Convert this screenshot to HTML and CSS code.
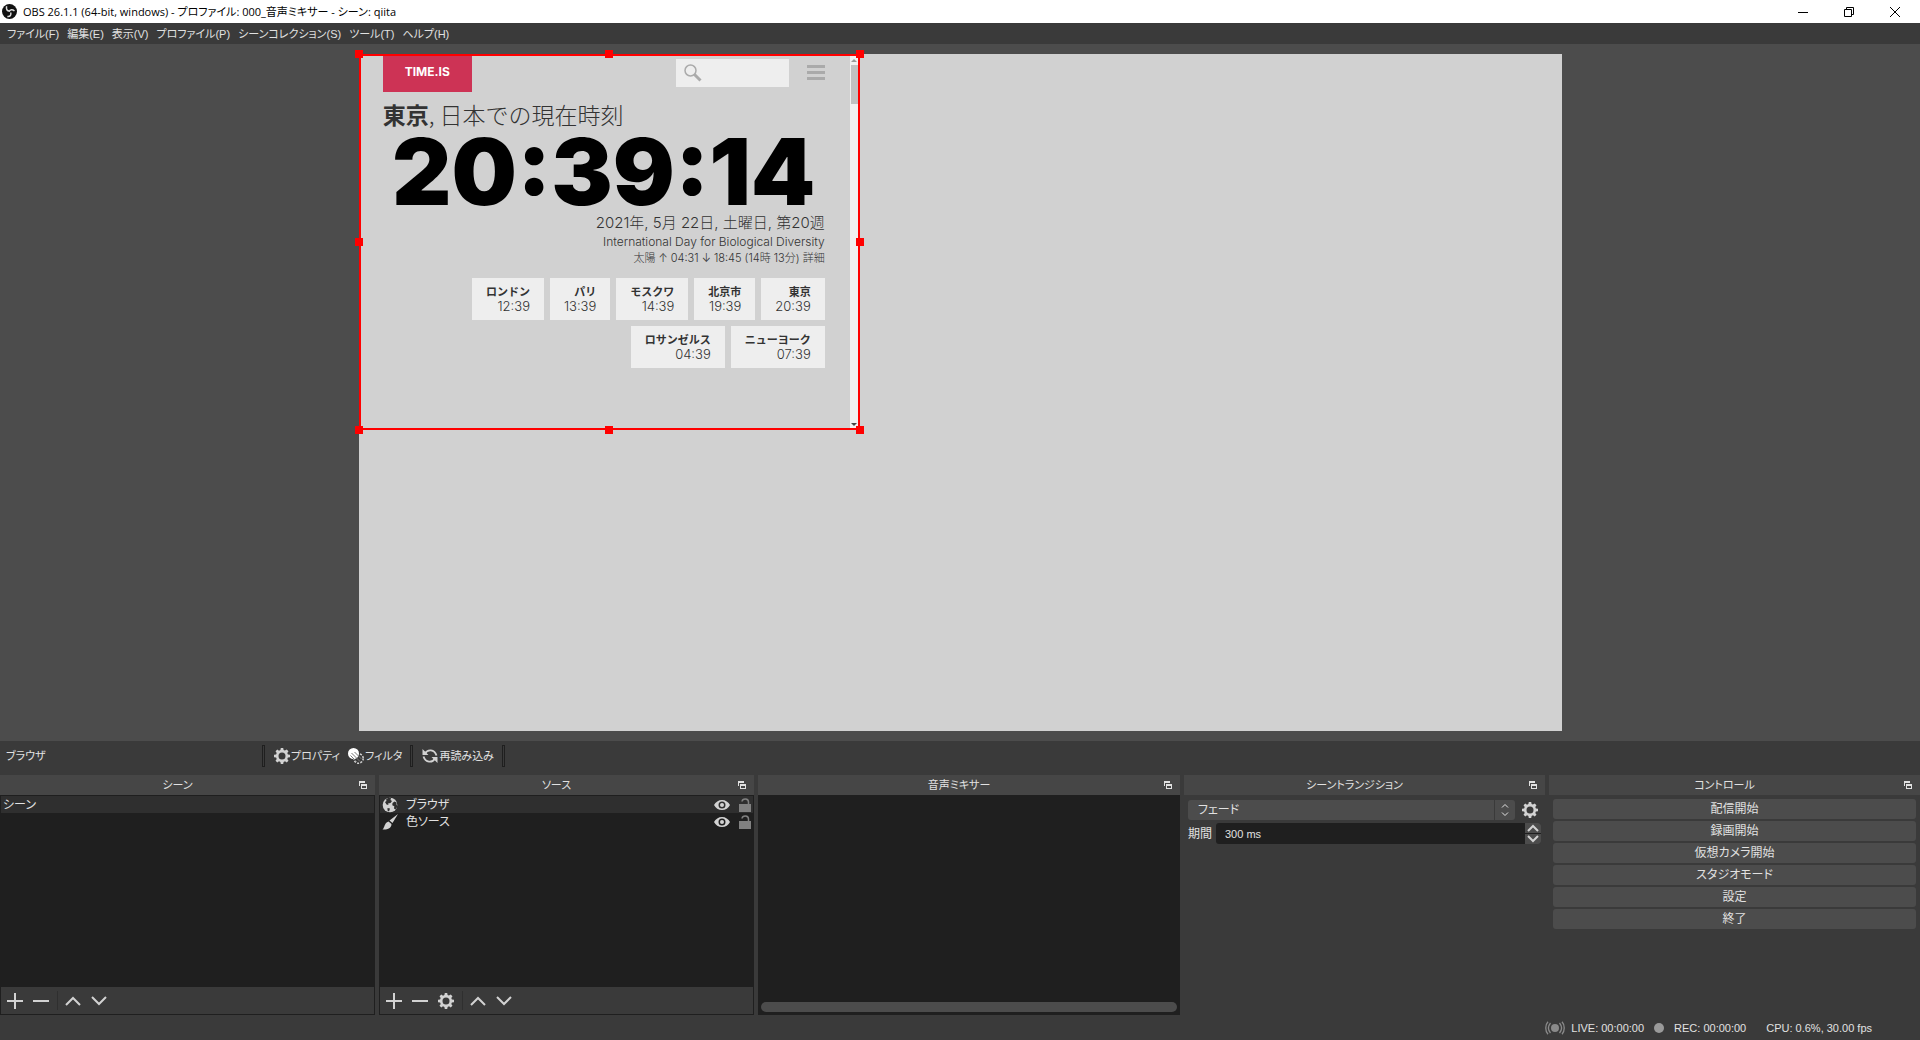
FILE: index.html
```html
<!DOCTYPE html>
<html lang="ja">
<head>
    <meta charset="UTF-8">
    <meta name="viewport" content="width=device-width, initial-scale=1.0">
    <title>OBS 26.1.1</title>
    <link rel="stylesheet" href="styles.css">
</head>
<body>
    <!-- Общие иконки -->
    <svg class="sprite" aria-hidden="true">
        <symbol id="gear" viewBox="0 0 16 16">
            <path fill-rule="evenodd" d="M6.8 0h2.4l.4 2.1 1.3.5L12.700 1.500l1.800 1.800-1.200 1.700.6 1.400 2.100.4v2.400l-2.100.4-.6 1.400 1.200 1.700-1.800 1.800-1.700-1.200-1.400.6-.4 2.100H6.800l-.4-2.100L5 13.300l-1.700 1.200-1.800-1.800L2.700 11l-.6-1.400L0 9.200V6.800l2.100-.4L2.700 5 1.500 3.300l1.800-1.800L5 2.700l1.400-.6zM8 4.500a3.500 3.500 0 1 0 0 7 3.500 3.500 0 0 0 0-7z"/>
        </symbol>
        <symbol id="plus" viewBox="0 0 16 16"><path d="M7 0h2v7h7v2H9v7H7V9H0V7h7z"/></symbol>
        <symbol id="minus" viewBox="0 0 16 16"><path d="M0 7h16v2H0z"/></symbol>
        <symbol id="up" viewBox="0 0 16 16"><path d="M1 12l7-7 7 7" fill="none" stroke="currentColor" stroke-width="2"/></symbol>
        <symbol id="down" viewBox="0 0 16 16"><path d="M1 4l7 7 7-7" fill="none" stroke="currentColor" stroke-width="2"/></symbol>
        <symbol id="float" viewBox="0 0 8 8">
            <path d="M0 0h6v2H1v3H0zM2 3h6v5H2zM3 5v2h4V5z" fill-rule="evenodd"/>
        </symbol>
        <symbol id="eye" viewBox="0 0 16 12">
            <path fill-rule="evenodd" d="M8 1c3.500 0 6.500 2 8 5-1.500 3-4.500 5-8 5S1.500 9 0 6c1.500-3 4.500-5 8-5zm0 1.500a3.500 3.500 0 1 0 0 7 3.500 3.500 0 0 0 0-7z"/>
            <circle cx="8" cy="6" r="2"/>
        </symbol>
        <symbol id="lock" viewBox="0 0 12 14">
            <path d="M0 6h12v8H0z"/>
            <path d="M3 3.500C3.500 0 9.500 0 9.500 4v3" fill="none" stroke="currentColor" stroke-width="1.500"/>
        </symbol>
    </svg>

    <!-- Заголовок окна -->
    <header class="titlebar">
        <svg class="logo" viewBox="0 0 16 16">
            <circle cx="8" cy="8" r="8" fill="#111"/>
            <g fill="none" stroke="#ddd" stroke-width="1.600">
                <path d="M5 2.500c-1 3 .5 5 3 5"/>
                <path d="M13.300 7.500c-2.200-2-4.600-1.700-5.800.7"/>
                <path d="M5.700 13.300c3 .5 4.600-1.700 3.500-4.200"/>
            </g>
        </svg>
        <span class="window-title">OBS 26.1.1 (64-bit, windows) - プロファイル: 000_音声ミキサー - シーン: qiita</span>
        <div class="window-buttons">
            <button type="button" aria-label="最小化"><svg viewBox="0 0 10 10"><path d="M0 5.500h10"/></svg></button>
            <button type="button" aria-label="元に戻す"><svg viewBox="0 0 10 10"><path d="M.5 2.500h7v7h-7zM2.500 2.500v-2h7v7h-2"/></svg></button>
            <button type="button" aria-label="閉じる"><svg viewBox="0 0 10 10"><path d="M0 0l10 10M10 0L0 10"/></svg></button>
        </div>
    </header>

    <nav class="menubar">
        <button type="button">ファイル(F)</button>
        <button type="button">編集(E)</button>
        <button type="button">表示(V)</button>
        <button type="button">プロファイル(P)</button>
        <button type="button">シーンコレクション(S)</button>
        <button type="button">ツール(T)</button>
        <button type="button">ヘルプ(H)</button>
    </nav>

    <!-- Предпросмотр сцены -->
    <main class="preview">
        <div class="canvas">
            <div class="source">
                <div class="site">
                    <div class="site-head">
                        <a class="brand" href="#">TIME.IS</a>
                        <label class="search">
                            <svg viewBox="0 0 18 18"><circle cx="6.500" cy="6.500" r="5.500" fill="none" stroke="#aaa" stroke-width="1.500"/><path d="M10.500 10.500l6 6" stroke="#aaa" stroke-width="3"/></svg>
                            <input type="text" aria-label="検索">
                        </label>
                        <button class="burger" type="button" aria-label="メニュー"><i></i><i></i><i></i></button>
                    </div>
                    <h1><b>東京</b>, 日本での現在時刻</h1>
                    <div class="clock">20:39:14</div>
                    <div class="date">2021年, 5月 22日, 土曜日, 第20週</div>
                    <div class="event"><a href="#">International Day for Biological Diversity</a></div>
                    <div class="sun">太陽 ↑ 04:31 ↓ 18:45 (14時 13分) 詳細</div>
                    <div class="cities">
                        <a href="#"><b>ロンドン</b><span>12:39</span></a>
                        <a href="#"><b>パリ</b><span>13:39</span></a>
                        <a href="#"><b>モスクワ</b><span>14:39</span></a>
                        <a href="#"><b>北京市</b><span>19:39</span></a>
                        <a href="#"><b>東京</b><span>20:39</span></a>
                        <a href="#"><b>ロサンゼルス</b><span>04:39</span></a>
                        <a href="#"><b>ニューヨーク</b><span>07:39</span></a>
                    </div>
                </div>
                <div class="site-scroll">
                    <svg viewBox="0 0 6 4"><path d="M3 0l3 3H0z" fill="#999"/></svg>
                    <div class="site-thumb"></div>
                    <svg viewBox="0 0 6 4"><path d="M3 4L0 1h6z" fill="#444"/></svg>
                </div>
                <span class="handle top left"></span>
                <span class="handle top center"></span>
                <span class="handle top right"></span>
                <span class="handle middle left"></span>
                <span class="handle middle right"></span>
                <span class="handle bottom left"></span>
                <span class="handle bottom center"></span>
                <span class="handle bottom right"></span>
            </div>
        </div>
    </main>

    <!-- Панель выбранного источника -->
    <div class="context-bar">
        <span class="context-name">ブラウザ</span>
        <span class="divider"></span>
        <button type="button"><svg class="icon"><use href="#gear"/></svg>プロパティ</button>
        <button type="button"><svg class="icon" viewBox="0 0 16 16">
            <circle cx="10.500" cy="10.500" r="4.700" fill="none" stroke="currentColor" stroke-width="1.500" stroke-dasharray="2 1.300"/>
            <circle cx="5.500" cy="5.500" r="5.500" fill="#fff"/>
            <path d="M3.500 5l8.500 8.500M6.500 4l7 7M2.500 7.500l7 7" stroke="#777" stroke-width="1"/>
        </svg>フィルタ</button>
        <span class="divider"></span>
        <button type="button"><svg class="icon" viewBox="0 0 16 16">
            <path d="M3 5.500C5.500 1 12.500 1 14.500 7.500M13 10.500C10.500 15 3.500 15 1.500 8.500" fill="none" stroke="currentColor" stroke-width="1.800"/>
            <path d="M.5 1v6h6zM15.500 15V9h-6z"/>
        </svg>再読み込み</button>
        <span class="divider"></span>
    </div>

    <div class="docks">
        <section class="dock">
            <h2><span>シーン</span><button type="button" aria-label="切り離す"><svg><use href="#float"/></svg></button></h2>
            <div class="panel">
                <ul class="list">
                    <li class="selected">シーン</li>
                </ul>
                <div class="tools">
                    <button type="button" aria-label="追加"><svg class="icon"><use href="#plus"/></svg></button>
                    <button type="button" aria-label="削除"><svg class="icon"><use href="#minus"/></svg></button>
                    <span class="line"></span>
                    <button type="button" aria-label="上へ"><svg class="icon"><use href="#up"/></svg></button>
                    <button type="button" aria-label="下へ"><svg class="icon"><use href="#down"/></svg></button>
                </div>
            </div>
        </section>

        <section class="dock">
            <h2><span>ソース</span><button type="button" aria-label="切り離す"><svg><use href="#float"/></svg></button></h2>
            <div class="panel">
                <ul class="list sources">
                    <li class="selected">
                        <svg class="icon" viewBox="0 0 16 16">
                            <circle cx="8" cy="8" r="7.300"/>
                            <path fill="#2f2f2f" d="M6 1l3 0-.5 2L10 4 8.500 6 6 6.500 6.500 8 4.500 7.500 3 5l1.500-1L4 2.500zM10.500 6l2-1.500 2 1v2l1 2-2 3-1.500-1 .3-2.300-2-1zM5.500 11l2.500.5-1 3-1.500-1z"/>
                        </svg>
                        <span class="name">ブラウザ</span>
                        <button type="button" aria-label="表示"><svg class="eye"><use href="#eye"/></svg></button>
                        <button type="button" aria-label="ロック"><svg class="lock"><use href="#lock"/></svg></button>
                    </li>
                    <li>
                        <svg class="icon" viewBox="0 0 16 16">
                            <path d="M16 0l-5.500 9-3-2.500zM6.500 7.500l3 2.500C9.500 14.500 5 16 .5 15.500 3 13.500 2 9 6.500 7.500z"/>
                        </svg>
                        <span class="name">色ソース</span>
                        <button type="button" aria-label="表示"><svg class="eye"><use href="#eye"/></svg></button>
                        <button type="button" aria-label="ロック"><svg class="lock"><use href="#lock"/></svg></button>
                    </li>
                </ul>
                <div class="tools">
                    <button type="button" aria-label="追加"><svg class="icon"><use href="#plus"/></svg></button>
                    <button type="button" aria-label="削除"><svg class="icon"><use href="#minus"/></svg></button>
                    <button type="button" aria-label="設定"><svg class="icon"><use href="#gear"/></svg></button>
                    <span class="line"></span>
                    <button type="button" aria-label="上へ"><svg class="icon"><use href="#up"/></svg></button>
                    <button type="button" aria-label="下へ"><svg class="icon"><use href="#down"/></svg></button>
                </div>
            </div>
        </section>

        <section class="dock">
            <h2><span>音声ミキサー</span><button type="button" aria-label="切り離す"><svg><use href="#float"/></svg></button></h2>
            <div class="panel mixer">
                <div class="mixer-scroll"></div>
            </div>
        </section>

        <section class="dock">
            <h2><span>シーントランジション</span><button type="button" aria-label="切り離す"><svg><use href="#float"/></svg></button></h2>
            <div class="transition">
                <div class="field">
                    <div class="combo">
                        <select aria-label="トランジション"><option>フェード</option></select>
                        <svg viewBox="0 0 8 12"><path d="M1 3.500l3-3 3 3M1 8.500l3 3 3-3" fill="none" stroke="currentColor"/></svg>
                    </div>
                    <button class="settings" type="button" aria-label="設定"><svg class="icon"><use href="#gear"/></svg></button>
                </div>
                <div class="field">
                    <label for="duration">期間</label>
                    <div class="spin">
                        <input type="text" id="duration" value="300 ms">
                        <div class="spin-buttons">
                            <button type="button" aria-label="増やす"><svg viewBox="0 0 12 8"><path d="M1 7l5-5 5 5"/></svg></button>
                            <button type="button" aria-label="減らす"><svg viewBox="0 0 12 8"><path d="M1 1l5 5 5-5"/></svg></button>
                        </div>
                    </div>
                </div>
            </div>
        </section>

        <section class="dock">
            <h2><span>コントロール</span><button type="button" aria-label="切り離す"><svg><use href="#float"/></svg></button></h2>
            <div class="controls">
                <button type="button">配信開始</button>
                <button type="button">録画開始</button>
                <button type="button">仮想カメラ開始</button>
                <button type="button">スタジオモード</button>
                <button type="button">設定</button>
                <button type="button">終了</button>
            </div>
        </section>
    </div>

    <footer class="statusbar">
        <svg class="live" viewBox="0 0 20 14">
            <circle cx="10" cy="7" r="4" fill="#8a8a8a"/>
            <path d="M5.500 2C3 5 3 9 5.500 12M14.500 2c2.500 3 2.500 7 0 10M3 .8C0 4 0 10 3 13.200M17 .8c3 3.200 3 9.200 0 12.400" fill="none" stroke="#8a8a8a" stroke-width="1.300"/>
        </svg>
        <span class="live-time">LIVE: 00:00:00</span>
        <span class="rec-dot"></span>
        <span class="rec-time">REC: 00:00:00</span>
        <span>CPU: 0.6%, 30.00 fps</span>
    </footer>
</body>
</html>
```
FILE: styles.css
```css
* {
    box-sizing: border-box;
}

body {
    margin: 0;
    height: 100vh;
    display: flex;
    flex-direction: column;
    background-color: #3a3a3a;
    color: #e1e1e1;
    font-family: "Liberation Sans", "Noto Sans CJK JP", sans-serif;
    font-size: 12px;
    line-height: 16px;
    font-feature-settings: "palt";
    overflow: hidden;
}

button, input, select {
    font: inherit;
    font-feature-settings: inherit;
    color: inherit;
    margin: 0;
    padding: 0;
    border: none;
    background: none;
}

svg {
    display: block;
    fill: currentColor;
}

.sprite {
    display: none;
}

.icon {
    width: 16px;
    height: 16px;
    flex: none;
    color: #d2d2d2;
}

/* Заголовок окна */
.titlebar {
    height: 23px;
    flex: none;
    display: flex;
    align-items: center;
    padding: 0 2px;
    background-color: #fff;
    color: #000;
    font-family: "Open Sans", "Noto Sans CJK JP", sans-serif;
    font-size: 11px;
}

.logo {
    width: 15px;
    height: 15px;
    margin-right: 6px;
}

.window-buttons {
    margin-left: auto;
    display: flex;
}

.window-buttons button {
    width: 46px;
    height: 22px;
    display: flex;
    justify-content: center;
    align-items: center;
}

.window-buttons svg {
    width: 10px;
    height: 10px;
    fill: none;
    stroke: #000;
    overflow: visible;
}

.menubar {
    height: 21px;
    flex: none;
    display: flex;
    align-items: center;
    gap: 8px;
    padding-left: 7px;
    font-size: 11px;
}

/* Предпросмотр */
.preview {
    flex: 1;
    min-height: 0;
    display: flex;
    justify-content: center;
    padding: 10px 10px 10px 11px;
    background-color: #4c4c4c;
}

.canvas {
    position: relative;
    height: 100%;
    aspect-ratio: 16 / 9;
    background-color: #d1d1d1;
}

.source {
    position: absolute;
    top: 0;
    left: 0;
    width: 501px;
    height: 376px;
    display: flex;
    border: 2px solid #f00;
    color: #333;
    font-family: Inter, "Noto Sans CJK JP", sans-serif;
    font-weight: 300;
}

.handle {
    position: absolute;
    width: 8px;
    height: 8px;
    background-color: #f00;
}

.top { top: -6px; }
.middle { top: calc(50% - 4px); }
.bottom { bottom: -6px; }
.left { left: -6px; }
.center { left: calc(50% - 4px); }
.right { right: -6px; }

.site {
    flex: 1;
    padding: 0 25px 0 22px;
    text-align: right;
}

.site a {
    color: inherit;
    text-decoration: none;
}

.site b {
    font-weight: 700;
}

.site-head {
    display: flex;
    align-items: flex-start;
    height: 36px;
}

.site-head .brand {
    width: 89px;
    height: 36px;
    margin-right: auto;
    background-color: #cd3355;
    color: #fff;
    font-weight: bold;
    line-height: 32px;
    text-align: center;
}

.search {
    width: 113px;
    height: 28px;
    margin-top: 3px;
    padding-left: 8px;
    display: flex;
    align-items: center;
    background-color: #eee;
}

.search svg {
    width: 18px;
    height: 18px;
    flex: none;
}

.search input {
    width: 100%;
}

.burger {
    margin: 9px 0 0 18px;
    display: flex;
    flex-direction: column;
    gap: 3px;
}

.burger i {
    width: 18px;
    height: 3px;
    background-color: #aaa;
}

.site h1 {
    margin: 6px 0 2px;
    font-family: "Noto Sans CJK JP", sans-serif;
    font-size: 23px;
    font-weight: 300;
    line-height: 32px;
    text-align: left;
    font-feature-settings: normal;
}

.clock {
    color: #000;
    font-size: 92px;
    font-weight: 900;
    line-height: 80px;
    text-align: center;
    white-space: nowrap;
}

.date {
    font-size: 15px;
    line-height: 22px;
}

.sun {
    font-size: 11px;
}

.cities {
    display: flex;
    flex-wrap: wrap;
    justify-content: flex-end;
    gap: 6px;
    margin: 12px 0 0 70px;
    font-feature-settings: normal;
}

.cities a {
    padding: 7px 14px;
    background-color: #eee;
}

.cities b, .cities span {
    display: block;
    line-height: 14px;
}

.cities b {
    font-size: 11px;
}

.cities span {
    font-size: 13px;
}

.site-scroll {
    width: 8px;
    padding: 3px 0 2px 1px;
    display: flex;
    flex-direction: column;
    background-color: #f1f1f1;
}

.site-scroll svg {
    width: 6px;
    height: 4px;
}

.site-thumb {
    height: 39px;
    margin: 2px 0 auto;
    background-color: #c1c1c1;
}

/* Панель источника */
.context-bar {
    height: 34px;
    flex: none;
    display: flex;
    align-items: flex-start;
    padding: 4px 0 0 6px;
    font-size: 11px;
}

.context-bar button, .context-name {
    display: flex;
    align-items: center;
    height: 22px;
}

.context-bar button {
    gap: 1px;
    margin-right: 8px;
}

.context-name {
    width: 256px;
}

.divider {
    width: 3px;
    height: 22px;
    margin-right: 9px;
    border: 1px solid #1f1f1f;
}

/* Доки */
.docks {
    height: 240px;
    flex: none;
    display: grid;
    grid-template-columns: 375fr 375fr 422fr 361fr 371fr;
    gap: 4px;
}

.dock {
    min-width: 0;
    display: flex;
    flex-direction: column;
}

.dock h2 {
    height: 20px;
    flex: none;
    display: flex;
    align-items: center;
    gap: 4px;
    margin: 0;
    padding-right: 8px;
    background-color: #464646;
    font-size: 11px;
    font-weight: normal;
}

.dock h2 span {
    flex: 1;
    text-align: center;
}

.dock h2 svg {
    width: 8px;
    height: 8px;
}

.panel {
    flex: 1;
    display: flex;
    flex-direction: column;
    background-color: #1f1f1f;
    border: 1px solid #1f1f1f;
}

.list {
    flex: 1;
    list-style: none;
    margin: 0;
    padding: 0;
}

.list li {
    height: 17px;
    display: flex;
    align-items: center;
    padding: 0 2px;
}

.list .selected {
    background-color: #2f2f2f;
}

.sources .name {
    flex: 1;
    padding-left: 8px;
}

.eye {
    width: 16px;
    height: 12px;
    color: #d2d2d2;
}

.lock {
    width: 12px;
    height: 14px;
    margin-left: 9px;
    color: #818181;
}

.tools {
    height: 27px;
    display: flex;
    align-items: center;
    gap: 10px;
    padding-left: 6px;
    background-color: #3a3a3a;
}

.line {
    width: 1px;
    height: 19px;
    margin: 0 -3px 0 -2px;
    background-color: #2f2f2f;
}

.mixer {
    justify-content: flex-end;
    padding: 2px;
}

.mixer-scroll {
    height: 10px;
    border-radius: 5px;
    background-color: #4c4c4c;
}

.transition {
    padding: 5px 4px;
    display: flex;
    flex-direction: column;
    gap: 3px;
}

.field {
    display: flex;
    align-items: center;
}

.combo {
    position: relative;
    flex: 1;
}

.combo select {
    appearance: none;
    display: block;
    width: 100%;
    height: 20px;
    padding-left: 10px;
    border-radius: 3px;
    background: linear-gradient(#3a3a3a, #3a3a3a) right 20px top / 1px 100% no-repeat #4c4c4c;
}

.combo svg {
    position: absolute;
    top: 4px;
    right: 6px;
    width: 8px;
    height: 12px;
    pointer-events: none;
}

.settings {
    margin: 0 3px 0 7px;
}

.field label {
    width: 28px;
}

.spin {
    flex: 1;
    height: 21px;
    display: flex;
    border-radius: 3px;
    background-color: #1f1f1f;
    overflow: hidden;
}

.spin input {
    flex: 1;
    min-width: 0;
    padding-left: 9px;
    font-size: 11px;
}

.spin-buttons {
    width: 16px;
    display: flex;
    flex-direction: column;
    gap: 1px;
}

.spin-buttons button {
    flex: 1;
    display: flex;
    align-items: center;
    justify-content: center;
    background-color: #4c4c4c;
}

.spin-buttons svg {
    width: 12px;
    height: 8px;
    fill: none;
    stroke: #d2d2d2;
    stroke-width: 2px;
}

.controls {
    padding: 4px;
    display: flex;
    flex-direction: column;
    gap: 2px;
}

.controls button {
    height: 20px;
    border-radius: 3px;
    background-color: #4c4c4c;
}

/* Строка состояния */
.statusbar {
    height: 25px;
    flex: none;
    display: flex;
    align-items: center;
    justify-content: flex-end;
    padding-right: 48px;
    font-size: 11px;
}

.live {
    width: 20px;
    height: 14px;
    margin-right: 6px;
}

.rec-dot {
    width: 10px;
    height: 10px;
    margin: 0 10px;
    border-radius: 50%;
    background-color: #9a9a9a;
}

.rec-time {
    margin-right: 20px;
}
```
